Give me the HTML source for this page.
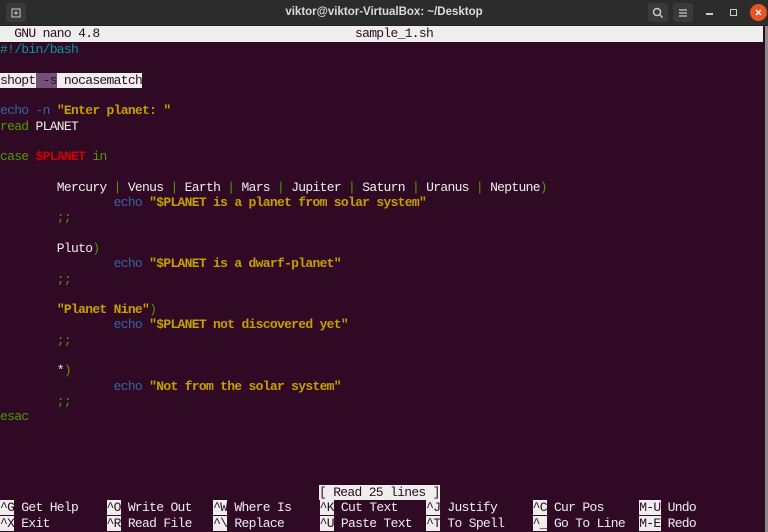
<!DOCTYPE html>
<html><head><meta charset="utf-8"><style>
*{margin:0;padding:0;box-sizing:border-box}
body{width:768px;height:532px;overflow:hidden;background:#300a24;font-family:"Liberation Mono",monospace;font-size:13px;letter-spacing:-0.7px;color:#eeeeec;position:relative}
#tb{position:absolute;left:0;top:0;width:768px;height:26px;background:#2c2c2c;border-bottom:1px solid #222;letter-spacing:0}
#tb .t{position:absolute;left:0;width:768px;top:6px;text-align:center;font-family:"Liberation Sans",sans-serif;font-weight:bold;font-size:11.5px;color:#dcdcdc}
.btn{position:absolute;top:3px;width:20px;height:19px;background:#3a3a3a;border-radius:3px}
.r{position:absolute;left:0;height:15.3px;line-height:15.3px;white-space:pre}
.g{color:#4e9a06}.b{color:#3465a4}.y{color:#c4a000;font-weight:bold}.rd{color:#cc0000;font-weight:bold}.c{color:#06989a}
.inv{background:#eeeeec;color:#300a24}
.hl{background:#75507b;color:#300a24}
#sb{position:absolute;left:765px;top:26px;width:3px;height:506px;background:#8a8a8a}
</style></head><body>
<div id="tb">
<div class="btn" style="left:6px"></div>
<svg style="position:absolute;left:11px;top:8px" width="10" height="10"><rect x="1" y="1" width="8" height="8" fill="none" stroke="#ccc" stroke-width="1"/><path d="M5 3v4M3 5h4" stroke="#ccc"/></svg>
<div class="t">viktor@viktor-VirtualBox: ~/Desktop</div>
<div class="btn" style="left:648px"></div>
<svg style="position:absolute;left:652px;top:7px" width="12" height="12"><circle cx="5" cy="5" r="3.5" fill="none" stroke="#ccc" stroke-width="1.4"/><path d="M7.5 7.5l3 3" stroke="#ccc" stroke-width="1.4"/></svg>
<div class="btn" style="left:673px"></div>
<svg style="position:absolute;left:678px;top:8px" width="10" height="10"><path d="M1 2h8M1 5h8M1 8h8" stroke="#ccc" stroke-width="1.2"/></svg>
<div style="position:absolute;left:706px;top:13px;width:7px;height:1.5px;background:#ccc"></div>
<div style="position:absolute;left:730px;top:9px;width:7px;height:7px;border:1.3px solid #ccc"></div>
<div style="position:absolute;left:750px;top:4px;width:17px;height:17px;border-radius:50%;background:#e95420"></div>
<svg style="position:absolute;left:754px;top:8px" width="9" height="9"><path d="M2 2l5 5M7 2l-5 5" stroke="#fff" stroke-width="1.3"/></svg>
</div>
<div class="r inv" style="top:26px;width:763px;height:16px">  GNU nano 4.8<span style="position:absolute;left:355px">sample_1.sh</span></div>
<div class="r c" style="top:42px">#!/bin/bash</div>
<div class="r" style="top:72.6px"><span class="inv">shopt</span><span class="hl"> -s</span><span class="inv"> nocasematch</span></div>
<div class="r" style="top:103.2px"><span class="b">echo -n</span> <span class="y">"Enter planet: "</span></div>
<div class="r" style="top:118.5px"><span class="g">read</span> PLANET</div>
<div class="r" style="top:149.1px"><span class="g">case</span> <span class="rd">$PLANET</span> <span class="g">in</span></div>
<div class="r" style="top:179.7px">        Mercury <span class="g">|</span> Venus <span class="g">|</span> Earth <span class="g">|</span> Mars <span class="g">|</span> Jupiter <span class="g">|</span> Saturn <span class="g">|</span> Uranus <span class="g">|</span> Neptune<span class="g">)</span></div>
<div class="r" style="top:195px">                <span class="b">echo</span> <span class="y">"$PLANET is a planet from solar system"</span></div>
<div class="r g" style="top:210.3px">        ;;</div>
<div class="r" style="top:240.9px">        Pluto<span class="g">)</span></div>
<div class="r" style="top:256.2px">                <span class="b">echo</span> <span class="y">"$PLANET is a dwarf-planet"</span></div>
<div class="r g" style="top:271.5px">        ;;</div>
<div class="r" style="top:302.1px">        <span class="y">"Planet Nine"</span><span class="g">)</span></div>
<div class="r" style="top:317.4px">                <span class="b">echo</span> <span class="y">"$PLANET not discovered yet"</span></div>
<div class="r g" style="top:332.7px">        ;;</div>
<div class="r" style="top:363.3px">        *<span class="g">)</span></div>
<div class="r" style="top:378.6px">                <span class="b">echo</span> <span class="y">"Not from the solar system"</span></div>
<div class="r g" style="top:393.9px">        ;;</div>
<div class="r g" style="top:409.2px">esac</div>
<div class="r" style="top:485px;left:319px"><span class="inv">[ Read 25 lines ]</span></div>
<div class="r" style="top:500.3px"><span class="inv">^G</span> Get Help    <span class="inv">^O</span> Write Out   <span class="inv">^W</span> Where Is    <span class="inv">^K</span> Cut Text    <span class="inv">^J</span> Justify     <span class="inv">^C</span> Cur Pos     <span class="inv">M-U</span> Undo</div>
<div class="r" style="top:515.6px"><span class="inv">^X</span> Exit        <span class="inv">^R</span> Read File   <span class="inv">^\</span> Replace     <span class="inv">^U</span> Paste Text  <span class="inv">^T</span> To Spell    <span class="inv">^_</span> Go To Line  <span class="inv">M-E</span> Redo</div>
<div id="sb"></div>
</body></html>
